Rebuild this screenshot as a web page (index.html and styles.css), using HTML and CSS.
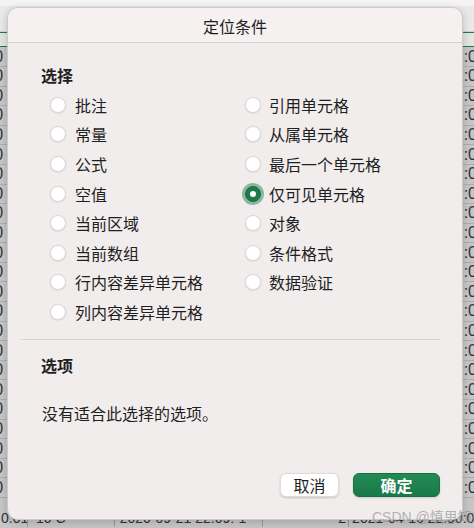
FILE: index.html
```html
<!DOCTYPE html>
<html lang="zh">
<head>
<meta charset="utf-8">
<title>定位条件</title>
<link rel="stylesheet" href="styles.css">
</head>
<body>
<div class="sheet">
  <div class="sheet-top"></div>
  <div class="sheet-head"></div>
  <div class="green-line"></div>
  <div class="sheet-sub"></div>
  <div class="green-line"></div>
  <div class="rows">
    <div class="row"><span class="l">0.0</span><span class="r">2:0</span></div>
    <div class="row"><span class="l">0.0</span><span class="r">2:0</span></div>
    <div class="row"><span class="l">0.0</span><span class="r">2:0</span></div>
    <div class="row"><span class="l">0.0</span><span class="r">2:0</span></div>
    <div class="row"><span class="l">0.0</span><span class="r">2:0</span></div>
    <div class="row"><span class="l">0.0</span><span class="r">2:0</span></div>
    <div class="row"><span class="l">0.0</span><span class="r">2:0</span></div>
    <div class="row"><span class="l">0.0</span><span class="r">2:0</span></div>
    <div class="row"><span class="l">0.0</span><span class="r">2:0</span></div>
    <div class="row"><span class="l">0.0</span><span class="r">2:0</span></div>
    <div class="row"><span class="l">0.0</span><span class="r">2:0</span></div>
    <div class="row"><span class="l">0.0</span><span class="r">2:0</span></div>
    <div class="row"><span class="l">0.0</span><span class="r">2:0</span></div>
    <div class="row"><span class="l">0.0</span><span class="r">2:0</span></div>
    <div class="row"><span class="l">0.0</span><span class="r">2:0</span></div>
    <div class="row"><span class="l">0.0</span><span class="r">2:0</span></div>
    <div class="row"><span class="l">0.0</span><span class="r">2:0</span></div>
    <div class="row"><span class="l">0.0</span><span class="r">2:0</span></div>
    <div class="row"><span class="l">0.0</span><span class="r">2:0</span></div>
    <div class="row"><span class="l">0.0</span><span class="r">2:0</span></div>
    <div class="row"><span class="l">0.0</span><span class="r">2:0</span></div>
    <div class="row"><span class="l">0.0</span><span class="r">2:0</span></div>
    <div class="row"><span class="l">0.0</span><span class="r">2:0</span></div>
    <div class="row last">
      <span class="c c1">0.01</span><span class="c c2">10 C</span><span class="c c3">2020-09-21 22:09:21</span><span class="c c4">1</span><span class="c c5">2</span><span class="c c6">2021-04-16 22:50:0</span>
    </div>
  </div>
</div>

<div class="dialog">
  <div class="titlebar">定位条件</div>
  <div class="content">
    <div class="section-title">选择</div>
    <div class="choices">
      <div class="col col-left">
        <div class="opt"><span class="radio"></span>批注</div>
        <div class="opt"><span class="radio"></span>常量</div>
        <div class="opt"><span class="radio"></span>公式</div>
        <div class="opt"><span class="radio"></span>空值</div>
        <div class="opt"><span class="radio"></span>当前区域</div>
        <div class="opt"><span class="radio"></span>当前数组</div>
        <div class="opt"><span class="radio"></span>行内容差异单元格</div>
        <div class="opt"><span class="radio"></span>列内容差异单元格</div>
      </div>
      <div class="col col-right">
        <div class="opt"><span class="radio"></span>引用单元格</div>
        <div class="opt"><span class="radio"></span>从属单元格</div>
        <div class="opt"><span class="radio"></span>最后一个单元格</div>
        <div class="opt"><span class="radio checked"></span>仅可见单元格</div>
        <div class="opt"><span class="radio"></span>对象</div>
        <div class="opt"><span class="radio"></span>条件格式</div>
        <div class="opt"><span class="radio"></span>数据验证</div>
      </div>
    </div>
    <div class="divider"></div>
    <div class="section-title second">选项</div>
    <div class="note">没有适合此选择的选项。</div>
    <div class="footer">
      <button class="btn btn-cancel">取消</button>
      <button class="btn btn-ok">确定</button>
    </div>
  </div>
</div>

<div class="watermark">CSDN @慎思知行</div>
</body>
</html>
```

FILE: styles.css
```css
* { box-sizing: border-box; }

html, body {
  margin: 0;
  padding: 0;
  width: 474px;
  height: 528px;
  overflow: hidden;
}

body {
  font-family: "Noto Sans CJK SC", "Noto Sans", sans-serif;
  color: #1f1f1f;
  background: #c6c6c6;
  position: relative;
}

/* spreadsheet backdrop */
.sheet {
  display: flex;
  flex-direction: column;
  width: 474px;
  height: 528px;
  font-family: "Liberation Sans", Arial, sans-serif;
}
.sheet-top { height: 7px; background: #f4f4f4; }
.sheet-head { height: 31px; background: #e9e9e9; border-bottom: 1px solid #d0d0d0; }
.green-line { height: 2px; background: #1f7a4b; }
.sheet-sub { height: 15px; background: #e4e4e4; }
.rows { display: flex; flex-direction: column; background: #c6c6c6; }
.row {
  height: 19.6px;
  display: flex;
  justify-content: space-between;
  align-items: center;
  border-bottom: 1px solid #adadad;
  font-size: 16px;
  color: #333;
  overflow: hidden;
  white-space: nowrap;
}
.row .l { margin-left: -19px; }
.row .r { margin-right: -3px; }
.row.last {
  height: 30px;
  justify-content: flex-start;
  align-items: flex-start;
  padding-top: 11px;
  border-bottom: none;
}
.c { display: block; font-size: 14px; line-height: 18px; overflow: hidden; white-space: nowrap; }
.c1 { width: 28px; border-right: 1px solid #999; padding-left: 1px; }
.c2 { width: 87px; padding-left: 8px; border-right: 1px solid #999; }
.c3 { width: 120px; padding-left: 5px; }
.c4 { width: 29px; padding-left: 4px; border-right: 1px solid #999; }
.c5 { width: 86px; text-align: right; padding-right: 2px; border-right: 1px solid #999; }
.c6 { padding-left: 3px; }

/* dialog */
.dialog {
  position: absolute;
  left: 7px;
  top: 7px;
  width: 456px;
  height: 513px;
  background: #f2eded;
  border: 1px solid #cfcaca;
  border-radius: 11px;
  box-shadow: 0 2px 8px rgba(0,0,0,0.18);
  display: flex;
  flex-direction: column;
  overflow: hidden;
}

.titlebar {
  height: 35px;
  flex: none;
  background: #f6f1f1;
  border-bottom: 1px solid #d6d0d0;
  display: flex;
  align-items: center;
  justify-content: center;
  font-size: 16px;
  padding-top: 1px;
}

.content {
  flex: 1;
  display: flex;
  flex-direction: column;
  padding: 21px 22px 22px 0;
}

.section-title {
  font-size: 16px;
  font-weight: 700;
  line-height: 22px;
  padding-left: 33px;
}
.section-title.second { margin-top: 14px; }

.choices {
  display: flex;
  margin-top: 4px;
  padding-left: 42px;
}
.col { display: flex; flex-direction: column; }
.col-left { width: 195px; }

.opt {
  height: 29.6px;
  display: flex;
  align-items: center;
  font-size: 16px;
  white-space: nowrap;
}

.radio {
  width: 16px;
  height: 16px;
  border-radius: 50%;
  background: #ffffff;
  border: 1px solid #dcd7d7;
  box-shadow: 0 0.5px 1.5px rgba(0,0,0,0.12);
  margin-right: 9px;
  flex: none;
  position: relative;
}
.col-right .radio { margin-right: 8px; }

.radio.checked {
  background: #1d7a4a;
  border-color: #1a6f43;
  box-shadow: 0 0 0 3px rgba(52,140,92,0.55);
}
.radio.checked::after {
  content: "";
  position: absolute;
  left: 4px;
  top: 4px;
  width: 6px;
  height: 6px;
  border-radius: 50%;
  background: #ffffff;
}

.divider {
  height: 1px;
  background: #dbd5d5;
  margin: 12px 0 0 13px;
}

.note {
  font-size: 16px;
  line-height: 22px;
  margin-top: 26px;
  padding-left: 34px;
}

.footer {
  margin-top: auto;
  display: flex;
  justify-content: flex-end;
  gap: 14px;
}

.btn {
  height: 24px;
  border-radius: 6px;
  font-family: "Noto Sans CJK SC", "Noto Sans", sans-serif;
  font-size: 16px;
  line-height: 22px;
  padding: 0;
  cursor: pointer;
}
.btn-cancel {
  width: 59px;
  background: #ffffff;
  color: #1f1f1f;
  border: 1px solid #e0dcdc;
  box-shadow: 0 1px 2px rgba(0,0,0,0.18);
}
.btn-ok {
  width: 87px;
  background: linear-gradient(#238a55, #19794a);
  color: #ffffff;
  font-weight: 700;
  border: 1px solid #186f43;
  box-shadow: 0 1px 2px rgba(0,0,0,0.15);
}

.watermark {
  position: absolute;
  left: 372px;
  top: 506px;
  font-family: "Liberation Sans", "Noto Sans CJK SC", sans-serif;
  font-size: 14px;
  color: rgba(140,140,140,0.65);
  white-space: nowrap;
}
```
